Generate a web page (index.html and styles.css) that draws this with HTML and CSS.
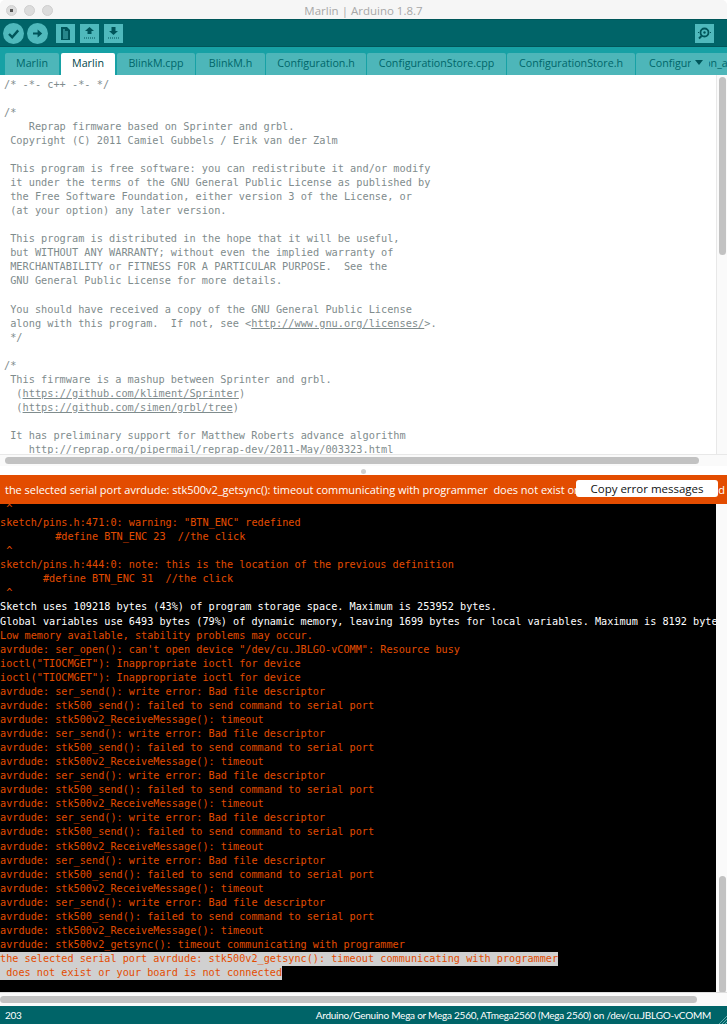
FILE: index.html
```html
<!DOCTYPE html>
<html lang="en">
<head>
<meta charset="utf-8">
<title>Marlin | Arduino 1.8.7</title>
<link rel="stylesheet" href="styles.css">
</head>
<body>
<div class="window">
  <header class="titlebar">
    <div class="lights"><span class="light light-dot"></span><span class="light"></span><span class="light"></span></div>
    <div class="title">Marlin | Arduino 1.8.7</div>
  </header>
  <div class="toolbar">
    <div class="tool-round"><svg width="21" height="21" viewBox="0 0 21 21"><path d="M6 11l3.200 3.200L15.200 7.400" fill="none" stroke="#00555a" stroke-width="2.400"/></svg></div>
    <div class="tool-round tool-gap"><svg width="21" height="21" viewBox="0 0 21 21"><path d="M6 9.400h4.600V6.400l4.600 4.100-4.600 4.100v-3H6z" fill="#00555a"/></svg></div>
    <div class="tool-square tool-first"><svg width="19" height="19" viewBox="0 0 19 19"><path d="M5 3h6l3 3v10H5z" fill="#00555a"/><path d="M7 8h5M7 10h5M7 12h5M7 14h5M7 6h2" stroke="#4fb9bc" stroke-width="1"/></svg></div>
    <div class="tool-square"><svg width="19" height="19" viewBox="0 0 19 19"><path d="M9.500 3l4.500 4h-2.500v3h-4V7H5z" fill="#00555a"/><path d="M4 14h11" stroke="#00555a" stroke-width="1" stroke-dasharray="1 1"/></svg></div>
    <div class="tool-square"><svg width="19" height="19" viewBox="0 0 19 19"><path d="M9.500 11l4.500-4h-2.500V3h-4v4H5z" fill="#00555a"/><path d="M4 14h11" stroke="#00555a" stroke-width="1" stroke-dasharray="1 1"/></svg></div>
    <div class="tool-square tool-monitor"><svg width="19" height="19" viewBox="0 0 19 19"><circle cx="9.500" cy="8.500" r="4" fill="none" stroke="#00555a" stroke-width="1.800"/><circle cx="9.500" cy="8.500" r="1.200" fill="#00555a"/><path d="M6.500 12l-2.500 2.500" stroke="#00555a" stroke-width="2"/><path d="M3 8.500h1M15 8.500h1" stroke="#00555a" stroke-width="1"/></svg></div>
  </div>
  <nav class="tabs">
    <div class="tab tab-w54">Marlin</div>
    <div class="tab tab-w54 tab-active">Marlin</div>
    <div class="tab tab-w78">BlinkM.cpp</div>
    <div class="tab tab-w69">BlinkM.h</div>
    <div class="tab tab-w100">Configuration.h</div>
    <div class="tab tab-w139">ConfigurationStore.cpp</div>
    <div class="tab tab-w128">ConfigurationStore.h</div>
    <div class="tab tab-last">Configuration_adv.h<span class="tab-menu"></span></div>
  </nav>
  <main class="editor">
    <div class="editor-view">
      <pre class="code">/* -*- c++ -*- */

/*
    Reprap firmware based on Sprinter and grbl.
 Copyright (C) 2011 Camiel Gubbels / Erik van der Zalm

 This program is free software: you can redistribute it and/or modify
 it under the terms of the GNU General Public License as published by
 the Free Software Foundation, either version 3 of the License, or
 (at your option) any later version.

 This program is distributed in the hope that it will be useful,
 but WITHOUT ANY WARRANTY; without even the implied warranty of
 MERCHANTABILITY or FITNESS FOR A PARTICULAR PURPOSE.  See the
 GNU General Public License for more details.

 You should have received a copy of the GNU General Public License
 along with this program.  If not, see &lt;<u>http://www.gnu.org/licenses/</u>&gt;.
 */

/*
 This firmware is a mashup between Sprinter and grbl.
  (<u>https://github.com/kliment/Sprinter</u>)
  (<u>https://github.com/simen/grbl/tree</u>)

 It has preliminary support for Matthew Roberts advance algorithm
    <u>http://reprap.org/pipermail/reprap-dev/2011-May/003323.html</u></pre>
      <div class="vtrack"><div class="vthumb"></div></div>
    </div>
    <div class="htrack"><div class="hthumb"></div></div>
  </main>
  <div class="divider"><span class="grip"></span></div>
  <div class="errorbar">
    <div class="errortext">the selected serial port avrdude: stk500v2_getsync(): timeout communicating with programmer  does not exist or your board is not connected</div>
    <div class="copybtn">Copy error messages</div>
  </div>
  <section class="console">
    <div class="console-view">
      <div class="console-text">
<pre class="err"> ^
sketch/pins.h:471:0: warning: "BTN_ENC" redefined
         #define BTN_ENC 23  //the click
 ^
sketch/pins.h:444:0: note: this is the location of the previous definition
       #define BTN_ENC 31  //the click
 ^</pre>
<pre class="out">Sketch uses 109218 bytes (43%) of program storage space. Maximum is 253952 bytes.
Global variables use 6493 bytes (79%) of dynamic memory, leaving 1699 bytes for local variables. Maximum is 8192 bytes.</pre>
<pre class="err">Low memory available, stability problems may occur.
avrdude: ser_open(): can't open device "/dev/cu.JBLGO-vCOMM": Resource busy
ioctl("TIOCMGET"): Inappropriate ioctl for device
ioctl("TIOCMGET"): Inappropriate ioctl for device
avrdude: ser_send(): write error: Bad file descriptor
avrdude: stk500_send(): failed to send command to serial port
avrdude: stk500v2_ReceiveMessage(): timeout
avrdude: ser_send(): write error: Bad file descriptor
avrdude: stk500_send(): failed to send command to serial port
avrdude: stk500v2_ReceiveMessage(): timeout
avrdude: ser_send(): write error: Bad file descriptor
avrdude: stk500_send(): failed to send command to serial port
avrdude: stk500v2_ReceiveMessage(): timeout
avrdude: ser_send(): write error: Bad file descriptor
avrdude: stk500_send(): failed to send command to serial port
avrdude: stk500v2_ReceiveMessage(): timeout
avrdude: ser_send(): write error: Bad file descriptor
avrdude: stk500_send(): failed to send command to serial port
avrdude: stk500v2_ReceiveMessage(): timeout
avrdude: ser_send(): write error: Bad file descriptor
avrdude: stk500_send(): failed to send command to serial port
avrdude: stk500v2_ReceiveMessage(): timeout
avrdude: stk500v2_getsync(): timeout communicating with programmer</pre>
<pre class="err sel">the selected serial port avrdude: stk500v2_getsync(): timeout communicating with programmer</pre>
<pre class="err sel"> does not exist or your board is not connected</pre>
      </div>
      <div class="vtrack vtrack-console"><div class="vthumb vthumb-console"></div></div>
    </div>
    <div class="htrack htrack-console"><div class="hthumb hthumb-console"></div></div>
  </section>
  <footer class="status">
    <span>203</span>
    <span>Arduino/Genuino Mega or Mega 2560, ATmega2560 (Mega 2560) on /dev/cu.JBLGO-vCOMM</span>
    <svg class="resize" width="8" height="8" viewBox="0 0 8 8"><path d="M0 8L8 0M3 8L8 3M6 8L8 6" stroke="#5aa9ab" stroke-width="1"/></svg>
  </footer>
</div>
</body>
</html>
```
FILE: styles.css
```css
* { box-sizing: border-box; }
html, body { margin: 0; padding: 0; background: #fff; }
body { width: 727px; height: 1024px; overflow: hidden; font-family: "Open Sans", "Liberation Sans", sans-serif; }
pre { margin: 0; font: inherit; }
.window { display: flex; flex-direction: column; width: 727px; height: 1024px; }

.titlebar { flex: 0 0 19px; position: relative; display: flex; align-items: center; justify-content: center; padding-top: 1px; background: #f6f6f6; border-radius: 5px 5px 0 0; }
.lights { position: absolute; left: 6px; top: 5px; display: flex; gap: 7px; }
.light { width: 11px; height: 11px; border-radius: 50%; background: #dcdcdc; border: 1px solid #cfcfcf; }
.light-dot { background: radial-gradient(circle, #555 0 1.500px, #dcdcdc 2px); }
.title { font-size: 11.500px; color: #a8a8a8; }

.toolbar { flex: 0 0 28px; display: flex; align-items: center; padding: 1px 13px 0 3px; background: #006468; border-top: 1px solid #00565a; border-bottom: 1px solid #00565a; }
.tool-round { width: 21px; height: 21px; border-radius: 50%; background: #4fb9bc; }
.tool-gap { margin-left: 3px; }
.tool-square { width: 19px; height: 19px; background: #4fb9bc; margin-right: 5px; }
.tool-first { margin-left: 8px; }
.tool-monitor { margin-left: auto; margin-right: 0; }
.tool-round svg, .tool-square svg { display: block; }

.tabs { flex: 0 0 28px; display: flex; align-items: flex-end; gap: 1px; padding-left: 5px; background: #17a1a5; overflow: hidden; }
.tab { flex: none; height: 22px; display: flex; align-items: center; justify-content: center; padding-bottom: 3px; background: #4db6b9; color: #00666a; font-size: 10.700px; border-radius: 2px 2px 0 0; }
.tab-active { background: #fff; color: #00454a; height: 22px; margin: 0 1px; }
.tab-w54 { width: 54px; }
.tab-w78 { width: 78px; }
.tab-w69 { width: 69px; }
.tab-w100 { width: 100px; }
.tab-w139 { width: 139px; }
.tab-w128 { width: 128px; }
.tab-last { width: 130px; padding-left: 13px; justify-content: flex-start; position: relative; white-space: nowrap; }
.tab-menu { position: absolute; left: 55px; top: 0; width: 18px; height: 22px; background: #4db6b9; }
.tab-menu::after { content: ""; position: absolute; left: 4px; top: 7px; border-left: 4.500px solid transparent; border-right: 4.500px solid transparent; border-top: 5px solid #00565a; }

.editor { flex: 0 0 391px; min-height: 0; display: flex; flex-direction: column; background: #fff; overflow: hidden; }
.editor-view { flex: 1; min-height: 0; display: flex; overflow: hidden; }
.code { flex: 1; min-width: 0; overflow: hidden; padding: 1.500px 0 0 4px; font-family: "DejaVu Sans Mono", monospace; font-size: 10.270px; line-height: 14.060px; color: #7f8c8d; }
.vtrack { flex: 0 0 11px; background: #fafafa; border-left: 1px solid #e8e8e8; padding: 2px 1px 2px 2px; }
.vthumb { width: 7px; height: 178px; border-radius: 4px; background: #c2c2c2; }
.htrack { flex: 0 0 12px; padding: 2px 0 2px 5px; background: #fafafa; border-top: 1px solid #e8e8e8; }
.hthumb { width: 694px; height: 7px; border-radius: 4px; background: #c2c2c2; }

.divider { flex: 0 0 9px; display: flex; justify-content: center; align-items: flex-start; padding-top: 3px; background: #fff; }
.grip { width: 5px; height: 5px; border-radius: 50%; background: #cfcfcf; }

.errorbar { flex: 0 0 29px; position: relative; display: flex; align-items: center; padding-left: 5px; background: #e34c00; overflow: hidden; }
.errortext { color: #fff; font-size: 11px; letter-spacing: -0.030px; white-space: pre; }
.copybtn { position: absolute; left: 576px; top: 5px; width: 142px; height: 17px; display: flex; align-items: center; justify-content: center; background: #fff; color: #111; font-size: 11.500px; border-radius: 3px; }

.console { flex: 0 0 502px; min-height: 0; display: flex; flex-direction: column; background: #fff; overflow: hidden; }
.console-view { flex: 1; min-height: 0; display: flex; background: #000; overflow: hidden; }
.console-text { flex: 1; min-width: 0; overflow: hidden; margin-top: -2px; font-family: "DejaVu Sans Mono", monospace; font-size: 10.200px; line-height: 14.070px; }
.err { color: #e34c00; }
.out { color: #fff; }
.sel { background: #d0d0d0; width: fit-content; }
.vtrack-console { padding: 0 1px 0 3px; border-left: 0; }
.vthumb-console { height: 117px; margin-top: 372px; }
.htrack-console { flex: 0 0 13px; padding: 3px 0 3px 0; border-top: 1px solid #ddd; }
.hthumb-console { width: 697px; }

.status { flex: 1; position: relative; display: flex; justify-content: space-between; align-items: center; padding: 0 16px 0 5px; background: #006468; color: #fff; font-family: Lato, "Open Sans", sans-serif; font-size: 10px; letter-spacing: -0.240px; }
.resize { position: absolute; right: 0; bottom: 0; }
```
